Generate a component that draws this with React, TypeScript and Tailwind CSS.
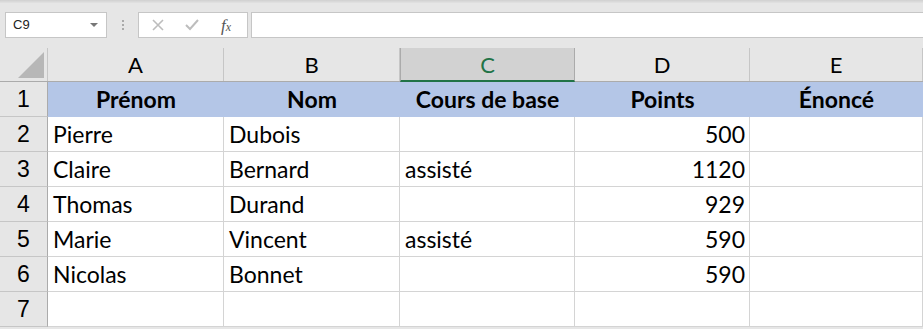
import React from "react";

const cols = ["A", "B", "C", "D", "E"];
const widths = ["w-[176px]", "w-[176px]", "w-[175px]", "w-[175px]", "w-[173px]"];

const rows = [
  ["Pierre", "Dubois", "", "500", ""],
  ["Claire", "Bernard", "assisté", "1120", ""],
  ["Thomas", "Durand", "", "929", ""],
  ["Marie", "Vincent", "assisté", "590", ""],
  ["Nicolas", "Bonnet", "", "590", ""],
  ["", "", "", "", ""],
];

const headers = ["Prénom", "Nom", "Cours de base", "Points", "Énoncé"];

export default function App() {
  return (
    <div className="w-[923px] h-[329px] overflow-hidden bg-[#e6e6e6] font-['Lato','Liberation_Sans',sans-serif] text-black">
      {/* Barre de formule */}
      <div className="h-[3px] bg-gradient-to-b from-[#d0d0d0] to-[#e2e2e2]" />
      <div className="h-[45px] flex items-start pt-[9px] pl-[5px]">
        <div className="w-[102px] h-[26px] bg-white border border-[#c6c6c6] flex items-center justify-between pl-[7px] pr-[8px]">
          <span className="text-[13px] font-['Liberation_Sans',sans-serif] text-[#222]">C9</span>
          <span className="w-0 h-0 border-l-[4px] border-r-[4px] border-t-[4px] border-l-transparent border-r-transparent border-t-[#777]" />
        </div>
        <div className="w-[31px] h-[26px] flex flex-col items-center justify-center gap-[2px]">
          <span className="w-[2px] h-[2px] bg-[#aaa]" />
          <span className="w-[2px] h-[2px] bg-[#aaa]" />
          <span className="w-[2px] h-[2px] bg-[#aaa]" />
        </div>
        <div className="w-[110px] h-[26px] bg-white border border-[#c6c6c6] flex items-center">
          <svg width="14" height="14" viewBox="0 0 14 14" className="ml-[12px]">
            <path d="M2 2 L12 12 M12 2 L2 12" stroke="#bdbdbd" strokeWidth="1.6" />
          </svg>
          <svg width="16" height="14" viewBox="0 0 16 14" className="ml-[19px]">
            <path d="M2 7 L6 11 L14 2" stroke="#bdbdbd" strokeWidth="2" fill="none" />
          </svg>
          <span className="ml-[21px] text-[17px] italic font-['Liberation_Serif',serif] text-[#555] leading-none">
            f<span className="text-[12px]">x</span>
          </span>
        </div>
        <div className="ml-[3px] flex-1 h-[26px] bg-white border border-[#c6c6c6] border-r-0" />
      </div>

      {/* En-têtes de colonnes */}
      <div className="flex h-[34px] border-b border-[#ababab]">
        <div className="w-[48px] relative border-r border-[#c6c6c6]">
          <svg width="26" height="26" viewBox="0 0 26 26" className="absolute left-[18px] top-[4px]">
            <polygon points="26,0 26,26 0,26" fill="#b7b7b7" />
          </svg>
        </div>
        {cols.map((c, i) => (
          <div
            key={c}
            className={`${widths[i]} flex items-center justify-center text-[22px] ${
              c === "C"
                ? "bg-[#d2d2d2] text-[#217346] border-x border-[#ababab] border-b-2 border-b-[#217346] -mb-px"
                : "border-r border-[#c6c6c6]"
            }`}
          >
            {c}
          </div>
        ))}
      </div>

      {/* Ligne 1 : titres */}
      <div className="flex h-[35px]">
        <div className="w-[48px] bg-[#e6e6e6] border-r border-[#ababab] border-b border-b-[#c6c6c6] flex items-center justify-center text-[23px] font-['Liberation_Sans',sans-serif]">
          1
        </div>
        {headers.map((h, i) => (
          <div
            key={h}
            className={`${widths[i]} bg-[#b4c6e7] flex items-center justify-center text-[23px] font-bold`}
          >
            {h}
          </div>
        ))}
      </div>

      {/* Données */}
      {rows.map((r, ri) => (
        <div key={ri} className="flex h-[35px]">
          <div className="w-[48px] bg-[#e6e6e6] border-r border-[#ababab] border-b border-b-[#c6c6c6] flex items-center justify-center text-[23px] font-['Liberation_Sans',sans-serif]">
            {ri + 2}
          </div>
          {r.map((v, ci) => (
            <div
              key={ci}
              className={`${widths[ci]} bg-white border-r border-b border-[#d4d4d4] flex items-center text-[23px] ${
                ci === 3 ? "justify-end pr-[4px]" : "pl-[5px]"
              }`}
            >
              {v}
            </div>
          ))}
        </div>
      ))}
    </div>
  );
}
